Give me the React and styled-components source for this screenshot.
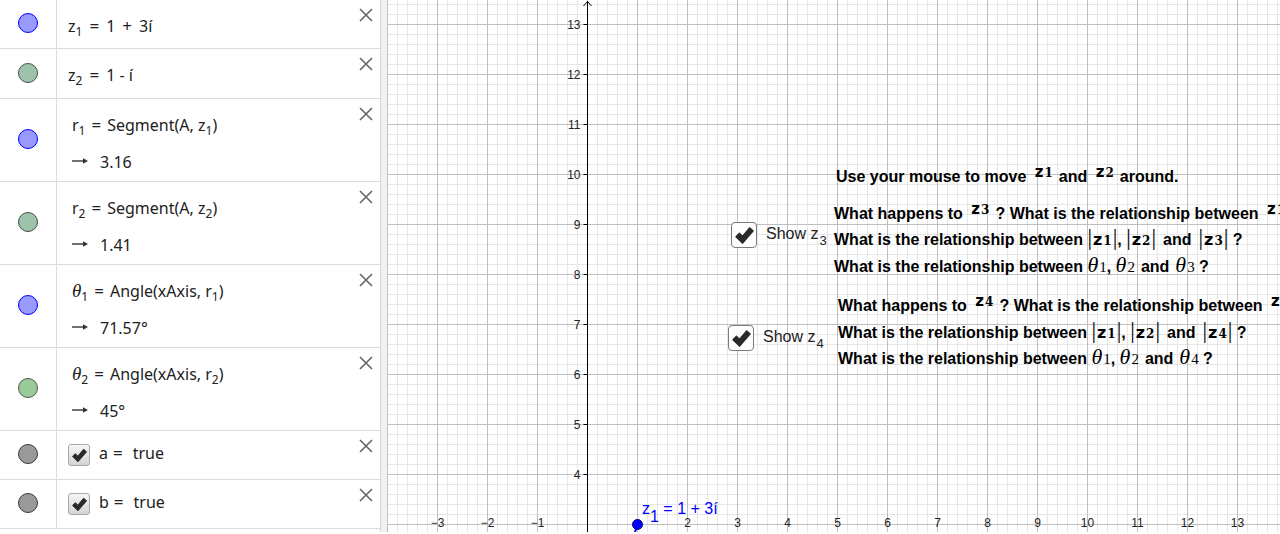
import React from "react";
import styled, { createGlobalStyle } from "styled-components";

const GlobalStyle = createGlobalStyle`
  html, body { margin: 0; padding: 0; background: #fff; }
  body { overflow: hidden; font-family: "Noto Sans", "Liberation Sans", sans-serif; }
`;

const Shell = styled.div`
  display: flex;
  width: 1280px;
  height: 534px;
  background: #fff;
`;

const AlgebraPanel = styled.div`
  flex: none;
  width: 381px;
  height: 532px;
  box-sizing: border-box;
  border-right: 1px solid #d6d6d6;
  color: #222;
  font-size: 16px;
  font-family: "Noto Sans", "Liberation Sans", sans-serif;
`;

const Splitter = styled.div`
  flex: none;
  width: 6px;
  height: 532px;
  background: #f1f1f1;
`;

const GraphView = styled.div`
  position: relative;
  flex: none;
  width: 893px;
  height: 532px;
  overflow: hidden;
  background: #fff;
`;

/* ---------- algebra rows ---------- */

const Row = styled.div`
  display: flex;
  height: ${(p) => p.$h}px;
  box-sizing: border-box;
  border-bottom: 1px solid #dcdcdc;
`;

const MarbleCell = styled.div`
  flex: none;
  width: 57px;
  box-sizing: border-box;
  border-right: 1px solid #dcdcdc;
  display: flex;
  align-items: center;
  justify-content: center;
`;

const Marble = styled.div`
  width: 20px;
  height: 20px;
  box-sizing: border-box;
  border-radius: 50%;
  margin-top: -2px;
  background: ${(p) => p.$fill};
  border: 1px solid ${(p) => p.$stroke};
`;

const TextContent = styled.div`
  flex: 1;
  min-width: 0;
  display: flex;
  flex-direction: column;
  gap: 14.6px;
  padding: 15px 0 0 ${(p) => (p.$inset ? 15 : 11)}px;
`;

const CheckContent = styled.div`
  flex: 1;
  min-width: 0;
  display: flex;
  align-items: center;
  gap: 9px;
  padding-left: 11px;
`;

const Formula = styled.div`
  height: 22px;
  line-height: 22px;
  white-space: nowrap;
`;

const CheckLabel = styled.span`
  line-height: 22px;
  padding-bottom: 4px;
  white-space: nowrap;
`;

const Op = styled.span`
  display: inline-block;
  font-size: 17px;
  margin: 0 ${(p) => (p.$r !== undefined ? p.$r : 7)}px 0 ${(p) => (p.$l !== undefined ? p.$l : 7)}px;
`;

const Sub = styled.span`
  font-size: 12px;
  vertical-align: -4px;
  line-height: 0;
`;

const Theta = styled.span`
  font-family: "Liberation Serif", "DejaVu Serif", serif;
  font-style: italic;
  font-size: 19px;
`;

const ArrowIcon = styled.svg`
  width: 16px;
  height: 8px;
  margin-right: 12px;
  vertical-align: 3px;
`;

const CloseButton = styled.button`
  flex: none;
  width: 14px;
  height: 14px;
  padding: 0;
  margin: 8px 7px 0 0;
  border: 0;
  background: none;
  display: flex;
  align-self: flex-start;
`;

const AlgebraCheckBox = styled.span`
  flex: none;
  width: 22px;
  height: 22px;
  box-sizing: border-box;
  border: 1px solid #a8a8a8;
  border-radius: 3px;
  background: linear-gradient(#f6f6f6, #d4d4d4);
  display: flex;
  align-items: center;
  justify-content: center;
`;

const CheckGlyph = ({ size = 16 }) => (
  <svg width={size} height={size} viewBox="0 0 24 24">
    <path
      d="M2.2 13.4 L6.2 9.4 L9.6 12.9 L17.8 3.2 L22 6.8 L9.9 20.8 Z"
      fill="#2a2a2a"
      strokeLinejoin="round"
      stroke="#2a2a2a"
      strokeWidth="1.4"
    />
  </svg>
);

const Close = () => (
  <CloseButton>
    <svg width="14" height="14" viewBox="0 0 14 14">
      <path d="M1 1 L13 13 M13 1 L1 13" stroke="#666" strokeWidth="1.6" />
    </svg>
  </CloseButton>
);

const Arrow = () => (
  <ArrowIcon viewBox="0 0 16 8">
    <path d="M0 4 H13" stroke="#333" strokeWidth="1.4" />
    <path d="M11 1.3 L16 4 L11 6.7 Z" fill="#333" />
  </ArrowIcon>
);

const BLUE = { fill: "#9999ff", stroke: "#0000ff" };
const TEAL = { fill: "#9dc4aa", stroke: "#4a4a4a" };
const GREEN = { fill: "#9acb99", stroke: "#555" };
const GRAY = { fill: "#9a9a9a", stroke: "#3a3a3a" };

const TextRow = ({ h, color, inset, lines }) => (
  <Row $h={h}>
    <MarbleCell>
      <Marble $fill={color.fill} $stroke={color.stroke} />
    </MarbleCell>
    <TextContent $inset={inset}>
      {lines.map((l, i) => (
        <Formula key={i}>{l}</Formula>
      ))}
    </TextContent>
    <Close />
  </Row>
);

const CheckRow = ({ name }) => (
  <Row $h={49}>
    <MarbleCell>
      <Marble $fill={GRAY.fill} $stroke={GRAY.stroke} />
    </MarbleCell>
    <CheckContent>
      <AlgebraCheckBox>
        <CheckGlyph size={17} />
      </AlgebraCheckBox>
      <CheckLabel>
        {name}
        <Op $l={5} $r={10}>=</Op>true
      </CheckLabel>
    </CheckContent>
    <Close />
  </Row>
);

/* ---------- graphics view ---------- */

const W = 893;
const H = 532;
const OX = 200.5; // y-axis
const Y13 = 24.5; // grid line of y = 13

const GridSvg = styled.svg`
  display: block;
`;

const Grid = () => {
  const minor = [];
  const major = [];
  for (let k = 0; k * 10 < W; k++) {
    const x = 0.5 + k * 10;
    (k % 5 === 0 ? major : minor).push(`M${x} 0 V${H}`);
  }
  for (let k = -2; Y13 + k * 10 < H; k++) {
    const y = Y13 + k * 10;
    (((k % 5) + 5) % 5 === 0 ? major : minor).push(`M0 ${y} H${W}`);
  }
  const yLabels = [];
  for (let n = 4; n <= 13; n++) yLabels.push(n);
  const xLabels = [-3, -2, -1, 2, 3, 4, 5, 6, 7, 8, 9, 10, 11, 12, 13];
  const seg = { x1: OX + 50, y1: 524.5, x2: OX, y2: 674.5 };
  return (
    <GridSvg width={W} height={H} viewBox={`0 0 ${W} ${H}`}>
      <path d={minor.join(" ")} stroke="#e6e6e6" strokeWidth="1" fill="none" />
      <path d={major.join(" ")} stroke="#c0c0c0" strokeWidth="1" fill="none" />
      <path d={`M${OX} 1 V${H}`} stroke="#000" strokeWidth="1" />
      <path d={`M${OX - 4} 6 L${OX} 1.5 L${OX + 4} 6`} stroke="#000" strokeWidth="1" fill="none" />
      {yLabels.map((n) => {
        const y = Y13 + (13 - n) * 50;
        return (
          <g key={n}>
            <path d={`M${OX - 4} ${y} H${OX}`} stroke="#000" strokeWidth="1" />
            <text
              x={OX - 7}
              y={y + 4.5}
              textAnchor="end"
              fontSize="12"
              fontFamily="Liberation Sans, Arial, sans-serif"
              fill="#222"
            >
              {n}
            </text>
          </g>
        );
      })}
      {xLabels.map((n) => (
        <text
          key={n}
          x={OX + n * 50}
          y={526.5}
          textAnchor="middle"
          fontSize="12"
          fontFamily="Liberation Sans, Arial, sans-serif"
          fill="#222"
        >
          {n < 0 ? `\u2212${-n}` : n}
        </text>
      ))}
      <line {...seg} stroke="#0000ff" strokeWidth="2" />
      <circle cx={OX + 50} cy={524.5} r="5" fill="#0000ff" stroke="#000080" strokeWidth="1" />
      <text
        x={255}
        y={513.5}
        fontSize="16"
        fontFamily="Liberation Sans, Arial, sans-serif"
        fill="#0000ff"
      >
        z
        <tspan dy="8">1</tspan>
        <tspan dy="-8"> = 1 + 3í</tspan>
      </text>
    </GridSvg>
  );
};

const CheckWidget = styled.label`
  position: absolute;
  left: ${(p) => p.$x}px;
  top: ${(p) => p.$y}px;
  display: flex;
  align-items: center;
  gap: 9px;
  font-family: "Liberation Sans", Arial, sans-serif;
  font-size: 16px;
  color: #222;
  white-space: nowrap;
`;

const WidgetBox = styled.span`
  flex: none;
  width: 26px;
  height: 26px;
  box-sizing: border-box;
  border: 1.5px solid #7a7a7a;
  border-radius: 4px;
  background: #fff;
  display: flex;
  align-items: center;
  justify-content: center;
`;

const WidgetText = styled.span`
  line-height: 20px;
  margin-top: -2px;
`;

const WidgetSub = styled.span`
  font-size: 13px;
  vertical-align: -6px;
  line-height: 0;
  margin-left: 1px;
`;

const TextBlock = styled.div`
  position: absolute;
  left: ${(p) => p.$x}px;
  top: ${(p) => p.$y}px;
  font-family: "Liberation Sans", Arial, sans-serif;
  font-weight: bold;
  font-size: 16px;
  color: #000;
`;

const Line = styled.div`
  height: 26.7px;
  line-height: 26.7px;
  white-space: nowrap;
`;

const RaisedZ = styled.span`
  font-family: "DejaVu Sans", sans-serif;
  font-weight: bold;
  font-size: 15px;
  line-height: 0;
  vertical-align: 5px;
  margin: 0 6px 0 4px;
`;

const ZIndex = styled.span`
  font-family: "DejaVu Serif", serif;
  font-size: 12px;
  font-weight: bold;
  margin-left: 1px;
`;

const AbsBar = styled.span`
  font-family: "Liberation Serif", serif;
  font-weight: normal;
  font-size: 23px;
  line-height: 0;
`;

const AbsZ = styled.span`
  font-family: "DejaVu Sans", sans-serif;
  font-weight: bold;
  font-size: 16px;
  margin: 0 1px;
`;

const MathTheta = styled.span`
  font-family: "Liberation Serif", serif;
  font-style: italic;
  font-weight: normal;
  font-size: 22px;
  line-height: 0;
`;

const ThetaIdx = styled.span`
  font-family: "Liberation Serif", serif;
  font-style: normal;
  font-weight: normal;
  font-size: 15px;
  margin-left: 1px;
`;

const Gap = styled.span`
  margin: 0 ${(p) => p.$m}px;
`;

const Zr = ({ n }) => (
  <RaisedZ>
    z<ZIndex>{n}</ZIndex>
  </RaisedZ>
);

const AbsVal = ({ n }) => (
  <>
    <AbsBar>|</AbsBar>
    <AbsZ>
      z<ZIndex>{n}</ZIndex>
    </AbsZ>
    <AbsBar>|</AbsBar>
  </>
);

const Th = ({ n }) => (
  <MathTheta>
    θ<ThetaIdx>{n}</ThetaIdx>
  </MathTheta>
);

const QuestionBlock = ({ x, y, k }) => (
  <TextBlock $x={x} $y={y}>
    <Line>
      What happens to <Zr n={k} />? What is the relationship between <Zr n="1" />
    </Line>
    <Line>
      What is the relationship between <AbsVal n="1" />, <AbsVal n="2" />
      <Gap $m={7}>and</Gap>
      <AbsVal n={k} /> ?
    </Line>
    <Line>
      What is the relationship between <Th n="1" />, <Th n="2" />
      <Gap $m={6}>and</Gap>
      <Th n={k} /> ?
    </Line>
  </TextBlock>
);

export default function App() {
  return (
    <>
      <GlobalStyle />
      <Shell>
        <AlgebraPanel>
          <TextRow
            h={49}
            color={BLUE}
            lines={[
              <>
                z<Sub>1</Sub>
                <Op>=</Op>1<Op>+</Op>3í
              </>,
            ]}
          />
          <TextRow
            h={50}
            color={TEAL}
            lines={[
              <>
                z<Sub>2</Sub>
                <Op>=</Op>1 - í
              </>,
            ]}
          />
          <TextRow
            h={83}
            color={BLUE}
            inset
            lines={[
              <>
                r<Sub>1</Sub>
                <Op $l={6} $r={6}>=</Op>Segment(A, z<Sub>1</Sub>)
              </>,
              <>
                <Arrow />
                3.16
              </>,
            ]}
          />
          <TextRow
            h={83}
            color={TEAL}
            inset
            lines={[
              <>
                r<Sub>2</Sub>
                <Op $l={6} $r={6}>=</Op>Segment(A, z<Sub>2</Sub>)
              </>,
              <>
                <Arrow />
                1.41
              </>,
            ]}
          />
          <TextRow
            h={83}
            color={BLUE}
            inset
            lines={[
              <>
                <Theta>θ</Theta>
                <Sub>1</Sub>
                <Op $l={6} $r={6}>=</Op>Angle(xAxis, r<Sub>1</Sub>)
              </>,
              <>
                <Arrow />
                71.57°
              </>,
            ]}
          />
          <TextRow
            h={83}
            color={GREEN}
            inset
            lines={[
              <>
                <Theta>θ</Theta>
                <Sub>2</Sub>
                <Op $l={6} $r={6}>=</Op>Angle(xAxis, r<Sub>2</Sub>)
              </>,
              <>
                <Arrow />
                45°
              </>,
            ]}
          />
          <CheckRow name="a" />
          <CheckRow name="b" />
        </AlgebraPanel>
        <Splitter />
        <GraphView>
          <Grid />
          <CheckWidget $x={344} $y={222}>
            <WidgetBox>
              <CheckGlyph size={21} />
            </WidgetBox>
            <WidgetText>
              Show z<WidgetSub>3</WidgetSub>
            </WidgetText>
          </CheckWidget>
          <CheckWidget $x={341} $y={325}>
            <WidgetBox>
              <CheckGlyph size={21} />
            </WidgetBox>
            <WidgetText>
              Show z<WidgetSub>4</WidgetSub>
            </WidgetText>
          </CheckWidget>
          <TextBlock $x={449} $y={164}>
            <Line>
              Use your mouse to move <Zr n="1" />and <Zr n="2" />around.
            </Line>
          </TextBlock>
          <QuestionBlock x={447} y={200.6} k="3" />
          <QuestionBlock x={451} y={293} k="4" />
        </GraphView>
      </Shell>
    </>
  );
}
